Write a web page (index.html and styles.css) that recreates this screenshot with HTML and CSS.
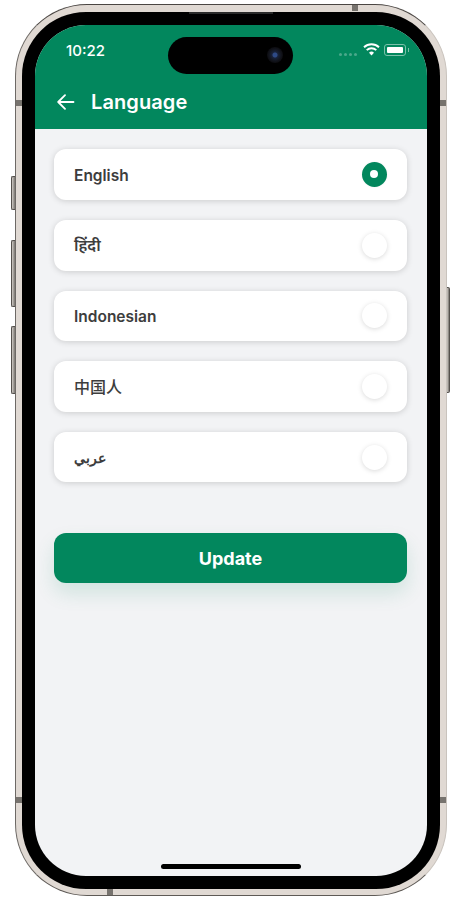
FILE: index.html
```html
<!DOCTYPE html>
<html lang="en">
<head>
<meta charset="utf-8">
<title>Language</title>
<link rel="stylesheet" href="styles.css">
</head>
<body>
<div class="phone">
  <span class="side side-mute"></span>
  <span class="side side-up"></span>
  <span class="side side-down"></span>
  <span class="side side-power"></span>
  <span class="band band-lt"></span>
  <span class="band band-rt"></span>
  <span class="band band-lb"></span>
  <span class="band band-rb"></span>
  <span class="band band-top"></span>
  <span class="band band-bottom"></span>
  <span class="speaker"></span>
  <div class="bezel">
    <div class="screen">
      <header class="header">
        <div class="status">
          <span class="time">10:22</span>
          <div class="status-icons">
            <span class="signal"><i></i><i></i><i></i><i></i></span>
            <svg class="wifi" width="17" height="13" viewBox="0 0 17 13"><path d="M8.5 12.6 6 9.7a3.7 3.7 0 0 1 5 0z" fill="#fff"/><path d="M3.7 7.1a7 7 0 0 1 9.6 0M1 4.2a11 11 0 0 1 15 0" fill="none" stroke="#fff" stroke-width="1.9"/></svg>
            <span class="battery"><b></b></span>
          </div>
        </div>
        <div class="island"><span class="camera"></span></div>
        <div class="title-bar">
          <svg class="back" width="18" height="16" viewBox="0 0 18 16"><path d="M16.5 8H1.5M8 1.2 1.2 8 8 14.8" fill="none" stroke="#fff" stroke-width="1.8" stroke-linecap="round" stroke-linejoin="round"/></svg>
          <h1 class="title">Language</h1>
        </div>
      </header>
      <main class="content">
        <div class="row"><span class="label">English</span><span class="radio radio-on"></span></div>
        <div class="row"><span class="label label-hi" lang="hi">हिंदी</span><span class="radio"></span></div>
        <div class="row"><span class="label">Indonesian</span><span class="radio"></span></div>
        <div class="row"><span class="label label-zh" lang="zh">中国人</span><span class="radio"></span></div>
        <div class="row"><span class="label label-ar" lang="ar">عربي</span><span class="radio"></span></div>
        <button class="update">Update</button>
      </main>
      <div class="home"></div>
    </div>
  </div>
</div>
</body>
</html>
```
FILE: styles.css
```css
* { box-sizing: border-box; }
html, body { margin: 0; height: 100%; background: #fff; }
body { padding: 4px 13px 0 15px; font-family: "Inter", "Noto Sans", "Noto Sans CJK SC", sans-serif; overflow: hidden; }

.phone {
  position: relative;
  width: 432px;
  height: 892px;
  padding: 7px 6px 6px 6px;
  background: #e0d9d3;
  border-radius: 72px;
  border: 1px solid;
  border-color: #4a4643 #c9c3bd #5e5a56 #6d6965;
}
.bezel { height: 100%; padding: 13px; background: #000; border-radius: 64px; }
.screen {
  position: relative;
  display: flex;
  flex-direction: column;
  height: 100%;
  overflow: hidden;
  background: #f2f3f5;
  border-radius: 51px;
}

.side { position: absolute; width: 4px; background: linear-gradient(90deg, #d0cbc5, #77736e); border: 1px solid #55514d; border-right: 0; border-radius: 2px 0 0 2px; }
.side-mute { left: -5px; top: 171px; height: 34px; }
.side-up { left: -5px; top: 235px; height: 67px; }
.side-down { left: -5px; top: 321px; height: 68px; }
.side-power { left: auto; right: -4px; top: 282px; height: 106px; width: 3px; border: 1px solid #55514d; border-left: 0; border-radius: 0 2px 2px 0; }

.band { position: absolute; background: #77736e; }
.band-lt, .band-rt, .band-lb, .band-rb { width: 6px; height: 6px; }
.band-lt { left: 0; top: 95px; }
.band-rt { right: 0; top: 95px; }
.band-lb { left: 0; top: 792px; }
.band-rb { right: 0; top: 792px; }
.band-top { left: 336px; top: 0; width: 6px; height: 6px; }
.band-bottom { left: 91px; bottom: 0; width: 6px; height: 6px; }
.speaker { position: absolute; left: 173px; top: 7px; width: 84px; height: 2px; background: #2a2a2a; }

.header { position: relative; flex: none; height: 104px; background: #02875d; color: #fff; }
.status { display: flex; justify-content: space-between; align-items: center; height: 50px; padding: 0 21px 0 31px; }
.time { font-size: 15px; font-weight: 500; }
.status-icons { display: flex; align-items: center; gap: 4px; }
.signal { display: flex; gap: 2px; margin-top: 9px; margin-right: 2px; }
.signal i { width: 3px; height: 3px; border-radius: 50%; background: #4aa88a; }
.wifi { display: block; margin-top: -2px; }
.battery { position: relative; display: block; width: 22px; height: 12px; padding: 2px; border: 1px solid #7cc1aa; border-radius: 3px; }
.battery b { display: block; height: 100%; background: #fff; border-radius: 1px; }
.battery::after { content: ""; position: absolute; right: -4px; top: 3px; width: 1px; height: 4px; background: #7cc1aa; }
.island { position: absolute; left: 133px; top: 11.5px; width: 125px; height: 37px; background: #000; border-radius: 18.5px; }
.camera { position: absolute; left: 99px; top: 10px; width: 16px; height: 16px; border-radius: 50%; background: radial-gradient(circle, #2e4a86 0 2px, #18223a 3px, #12141c 6px, #0c0c10 8px); }
.title-bar { display: flex; align-items: center; gap: 16px; padding: 13px 0 0 22px; }
.back { display: block; }
.title { margin: 0; font-size: 20px; font-weight: 600; line-height: 28px; letter-spacing: .1px; }

.content { flex: 1; display: flex; flex-direction: column; gap: 20px; padding: 20.4px 20px 0 19px; }
.row { display: flex; align-items: center; justify-content: space-between; height: 50.6px; padding: 0 20px; background: #fff; border-radius: 12px; box-shadow: 0 1px 6px rgba(0, 0, 0, .16); }
.label { padding-top: 2px; font-size: 15.5px; font-weight: 600; color: #3d3d3d; }
.label-hi { padding-top: 0; font-size: 16px; font-weight: 600; }
.label-zh { padding-top: 0; font-size: 16px; font-weight: 500; }
.label-ar { padding-top: 0; font-size: 14px; }
.radio { width: 25px; height: 25px; background: #fff; border-radius: 50%; box-shadow: 0 1px 5px rgba(0, 0, 0, .15); }
.radio-on { background: #02875d; border: 8.5px solid #02875d; box-shadow: 0 0 2px rgba(0, 0, 0, .08); }
.radio-on::after { content: ""; display: block; width: 8px; height: 8px; background: #fff; border-radius: 50%; }
.update { height: 50.6px; margin-top: 30.2px; padding: 2px 0 0; border: 0; border-radius: 12px; background: #02875d; color: #fff; font: 700 18px "Inter", sans-serif; box-shadow: 0 10px 20px rgba(2, 135, 93, .14); }
.home { position: absolute; left: 126px; bottom: 7px; width: 140px; height: 5px; background: #000; border-radius: 3px; }
```
